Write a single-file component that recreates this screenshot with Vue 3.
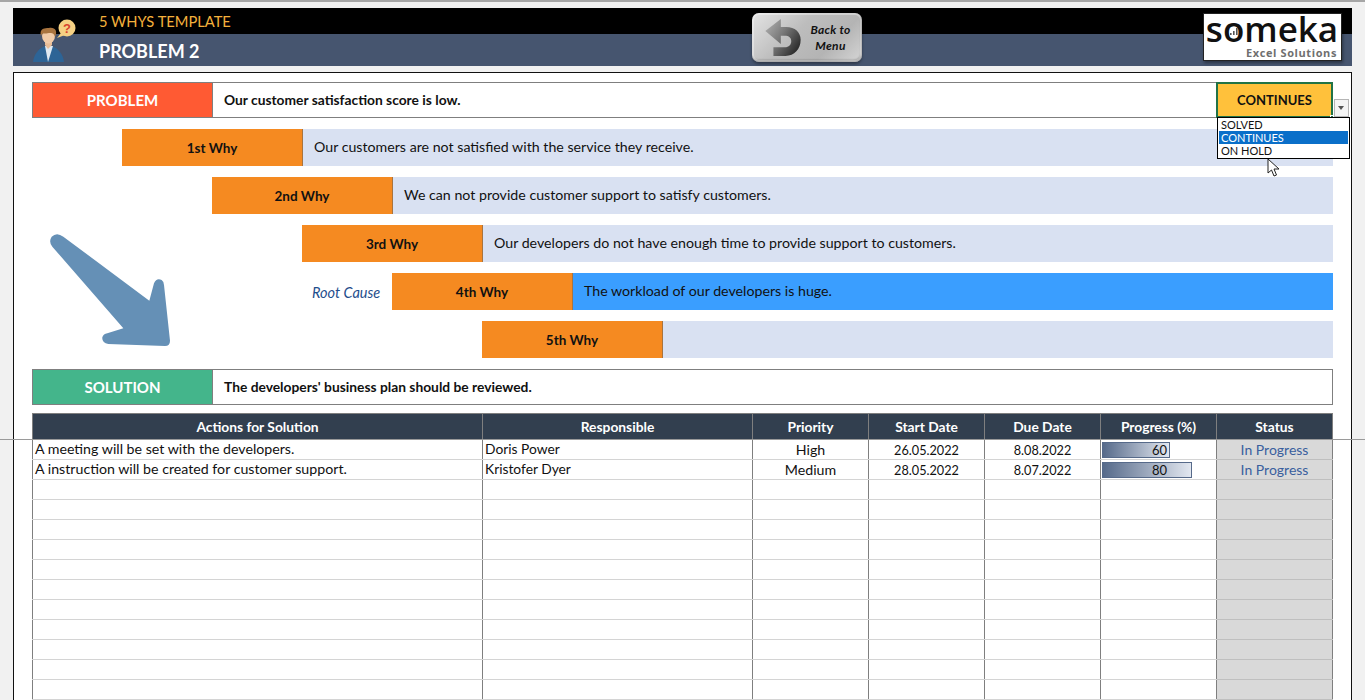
<script setup>
const whys = [
  { label: '1st Why', text: 'Our customers are not satisfied with the service they receive.', offset: 90 },
  { label: '2nd Why', text: 'We can not provide customer support to satisfy customers.', offset: 180 },
  { label: '3rd Why', text: 'Our developers do not have enough time to provide support to customers.', offset: 270 },
  { label: '4th Why', text: 'The workload of our developers is huge.', offset: 270, note: 'Root Cause', root: true },
  { label: '5th Why', text: '', offset: 450 }
];

const actions = [
  { action: 'A meeting will be set with the developers.', owner: 'Doris Power', priority: 'High', start: '26.05.2022', due: '8.08.2022', progress: 60, status: 'In Progress' },
  { action: 'A instruction will be created for customer support.', owner: 'Kristofer Dyer', priority: 'Medium', start: '28.05.2022', due: '8.07.2022', progress: 80, status: 'In Progress' }
];

const rows = [...actions, ...Array.from({ length: 11 }, () => ({}))];
const options = ['SOLVED', 'CONTINUES', 'ON HOLD'];
</script>

<template>
  <div class="page">
    <header class="banner">
      <svg class="avatar" viewBox="0 0 50 50" aria-hidden="true">
        <path d="M5 47 C6 38 12 33 17 31 L24 31 C29 33 35 38 36 47 Z" fill="#2d6496" />
        <path d="M17 31 L20 47 L25 31 Z" fill="#dfe9f2" />
        <path d="M17 30 L17 26 L24 26 L24 30 L20 34 Z" fill="#e9bd97" />
        <ellipse cx="20.5" cy="21" rx="6.5" ry="7.5" fill="#f1cba8" />
        <path d="M13 21 C11 13 17 13 21 13 C27 12 30 16 27 22 C26 18 24 18 21 18 C17 19 15 18 14 19 Z" fill="#a9743f" />
        <path d="M33 18 L29 23 L37 20 Z" fill="#f6d184" />
        <circle cx="39" cy="13" r="8.5" fill="#f6d184" />
        <text x="39" y="18" class="avatar-mark">?</text>
      </svg>
      <div class="titles">
        <span class="template-name">5 WHYS TEMPLATE</span>
        <span class="problem-name">PROBLEM 2</span>
      </div>
      <div class="back-button">
        <svg class="back-icon" viewBox="0 0 105 110" aria-hidden="true">
          <defs>
            <linearGradient id="backFill" x1="0" y1="0" x2="1" y2="0.7">
              <stop offset="0" stop-color="#b5b5b5" />
              <stop offset="0.5" stop-color="#7a7a7a" />
              <stop offset="1" stop-color="#2c2c2c" />
            </linearGradient>
          </defs>
          <path d="M0 36 L46 0 L46 24 L62 24 C88 24 105 40 105 62 C105 90 86 110 60 110 L24 110 L24 84 L58 84 C70 84 77 76 77 66 C77 56 70 50 58 50 L46 50 L46 74 Z" fill="url(#backFill)" />
        </svg>
        <span class="back-label">Back to<br />Menu</span>
      </div>
      <div class="logo">
        <span class="logo-word">s<span class="logo-o">o<svg class="logo-bars" viewBox="0 0 8 8" aria-hidden="true"><path d="M0 8 V6 H1.6 V8 Z M3 8 V4 H4.6 V8 Z M6 8 V1 H7.6 V8 Z" fill="#555" /></svg></span>meka</span>
        <span class="logo-sub">Excel Solutions</span>
      </div>
    </header>

    <main class="sheet">
      <svg class="big-arrow" viewBox="0 0 540 420" aria-hidden="true">
        <path d="M95 50 Q110 35 130 50 L388 242 L402 190 Q410 172 425 180 Q432 185 432 195 L450 362 Q450 378 435 378 L265 372 Q245 368 247 352 Q250 342 262 340 L310 325 L97 80 Q85 65 95 50 Z" fill="#6590b6" />
      </svg>

      <section class="headline">
        <div class="tag tag--problem">PROBLEM</div>
        <div class="headline-text">Our customer satisfaction score is low.</div>
        <div class="status-cell">CONTINUES<i class="fill-handle"></i></div>
      </section>

      <div class="dropdown">
        <div v-for="option in options" :key="option" class="dropdown-item" :class="{ 'dropdown-item--on': option === 'CONTINUES' }">{{ option }}</div>
      </div>
      <div class="dropdown-toggle"><i></i></div>
      <svg class="pointer" viewBox="0 0 14 20" aria-hidden="true">
        <path d="M1 1 L1 15 L4.5 12 L7 18 L9.5 17 L7 11 L12 11 Z" fill="#fff" stroke="#222" stroke-width="1" />
      </svg>

      <section v-for="why in whys" :key="why.label" class="why" :style="{ marginLeft: why.offset + 'px' }">
        <div v-if="why.note" class="why-note">{{ why.note }}</div>
        <div class="why-label">{{ why.label }}</div>
        <div class="why-text" :class="{ 'why-text--root': why.root }">{{ why.text }}</div>
      </section>

      <section class="headline headline--solution">
        <div class="tag tag--solution">SOLUTION</div>
        <div class="headline-text">The developers' business plan should be reviewed.</div>
      </section>

      <table class="actions">
        <colgroup>
          <col class="col-action" />
          <col class="col-owner" />
          <col class="col-small" />
          <col class="col-small" />
          <col class="col-small" />
          <col class="col-small" />
          <col class="col-small" />
        </colgroup>
        <thead>
          <tr>
            <th>Actions for Solution</th>
            <th>Responsible</th>
            <th>Priority</th>
            <th>Start Date</th>
            <th>Due Date</th>
            <th>Progress (%)</th>
            <th>Status</th>
          </tr>
        </thead>
        <tbody>
          <tr v-for="(row, i) in rows" :key="i">
            <td class="lifted">{{ row.action }}</td>
            <td class="lifted owner">{{ row.owner }}</td>
            <td class="center">{{ row.priority }}</td>
            <td class="center date">{{ row.start }}</td>
            <td class="center date">{{ row.due }}</td>
            <td class="progress">
              <template v-if="row.progress">
                <div class="bar" :style="{ width: row.progress * 1.13 + 'px' }"></div>
                <span class="bar-value">{{ row.progress }}</span>
              </template>
            </td>
            <td class="center status">{{ row.status }}</td>
          </tr>
        </tbody>
      </table>
    </main>

    <div class="split-line"></div>
  </div>
</template>

<style>
html,
body {
  margin: 0;
  overflow: hidden;
}
</style>

<style scoped>
.page {
  position: relative;
  box-sizing: border-box;
  width: 1365px;
  height: 700px;
  overflow: hidden;
  padding: 8px 13px 0 13px;
  background: #f1f1f1;
  border-top: 2px solid #a6a6a6;
  font-family: Lato, "Liberation Sans", sans-serif;
  color: #111;
}

.banner {
  display: flex;
  align-items: center;
  box-sizing: border-box;
  height: 58px;
  margin-top: -2px;
  padding: 0 10px 0 15px;
  background: linear-gradient(#000 0 26px, #46556f 26px);
}

.avatar {
  width: 50px;
  height: 50px;
  margin-top: 6px;
  flex: none;
}

.avatar-mark {
  font: 700 13px "Liberation Sans", sans-serif;
  fill: #d8442e;
  text-anchor: middle;
}

.titles {
  display: flex;
  flex-direction: column;
  width: 653px;
  margin-left: 21px;
  flex: none;
}

.template-name {
  height: 26px;
  line-height: 26px;
  color: #f4b13c;
  font-size: 14.7px;
}

.problem-name {
  height: 32px;
  line-height: 35px;
  color: #fff;
  font-size: 18px;
  font-weight: 700;
}

.back-button {
  display: flex;
  align-items: center;
  box-sizing: border-box;
  width: 110px;
  height: 49px;
  margin-top: 1px;
  padding-left: 13px;
  border-radius: 7px;
  background: linear-gradient(135deg, #e4e4e4 0%, #bdbdbd 40%, #b4b4b4 70%, #d6d6d6 100%);
  box-shadow: inset 0 0 0 2px rgba(255, 255, 255, 0.35), inset -1px -2px 2px rgba(0, 0, 0, 0.35), 0 2px 3px rgba(0, 0, 0, 0.35);
  flex: none;
}

.back-icon {
  width: 36px;
  height: 37px;
  flex: none;
}

.back-label {
  flex: 1;
  padding-right: 2px;
  text-align: center;
  color: #111;
  font-size: 12px;
  font-style: italic;
  font-weight: 700;
  line-height: 16px;
  letter-spacing: 0.3px;
}

.logo {
  display: flex;
  flex-direction: column;
  align-items: center;
  box-sizing: border-box;
  width: 139px;
  height: 48px;
  margin-left: auto;
  padding: 0 4px 0 3px;
  background: #fff;
  border: 1px solid #222;
  box-shadow: 1px 2px 3px rgba(0, 0, 0, 0.4);
  flex: none;
}

.logo-word {
  height: 31px;
  line-height: 29px;
  color: #111;
  font-family: "Open Sans", sans-serif;
  font-size: 35px;
  font-weight: 600;
  white-space: nowrap;
}

.logo-o {
  position: relative;
  display: inline-block;
}

.logo-bars {
  position: absolute;
  left: 7px;
  top: 13px;
  width: 8px;
  height: 8px;
}

.logo-sub {
  align-self: flex-end;
  color: #6f6f6f;
  font-family: "Open Sans", sans-serif;
  font-size: 11px;
  font-weight: 700;
  line-height: 15px;
  letter-spacing: 0.6px;
}

.sheet {
  position: relative;
  box-sizing: border-box;
  height: 640px;
  margin-top: 6px;
  padding: 9px 18px 0;
  background: #fff;
  border: 1px solid #111;
  border-bottom: 0;
}

.big-arrow {
  position: absolute;
  left: 6px;
  top: 147px;
  width: 180px;
  height: 140px;
}

.headline {
  display: flex;
  align-items: center;
  height: 36px;
  margin-bottom: 11px;
  border: 1px solid #7f7f7f;
  border-left: 0;
  box-sizing: border-box;
}

.headline--solution {
  margin-bottom: 8px;
}

.tag {
  display: flex;
  align-items: center;
  justify-content: center;
  box-sizing: border-box;
  width: 181px;
  height: 36px;
  margin-top: -1px;
  margin-bottom: -1px;
  border: 1px solid #7f7f7f;
  color: #fff;
  font-size: 15px;
  font-weight: 700;
  flex: none;
}

.tag--problem {
  background: #ff5a33;
}

.tag--solution {
  background: #44b58b;
}

.headline-text {
  flex: 1;
  padding: 0 0 2px 11px;
  font-size: 13.8px;
  font-weight: 700;
}

.status-cell {
  position: relative;
  z-index: 2;
  display: flex;
  align-items: center;
  justify-content: center;
  box-sizing: border-box;
  width: 117px;
  height: 36px;
  margin: -1px -1px -1px 0;
  background: #ffc13b;
  border: 2px solid #217346;
  font-size: 13px;
  font-weight: 700;
}

.fill-handle {
  position: absolute;
  right: -3px;
  bottom: -3px;
  width: 4px;
  height: 4px;
  background: #217346;
  border: 1px solid #fff;
  box-sizing: border-box;
}

.dropdown {
  position: absolute;
  z-index: 3;
  top: 44px;
  left: 1203px;
  box-sizing: border-box;
  width: 133px;
  height: 42px;
  padding: 0 1px;
  background: #fff;
  border: 1px solid #000;
}

.dropdown-item {
  height: 13px;
  padding-left: 2px;
  font-size: 11px;
  line-height: 13px;
}

.dropdown-item--on {
  background: #0a6fc9;
  color: #fff;
}

.dropdown-toggle {
  position: absolute;
  z-index: 3;
  top: 26px;
  left: 1320px;
  box-sizing: border-box;
  width: 15px;
  height: 18px;
  background: #f4f4f4;
  border: 1px solid #b5b5b5;
}

.dropdown-toggle i {
  position: absolute;
  left: 3px;
  top: 6px;
  border-style: solid;
  border-width: 4px 3.5px 0;
  border-color: #555 transparent transparent;
}

.pointer {
  position: absolute;
  z-index: 4;
  top: 85px;
  left: 1253px;
  width: 14px;
  height: 20px;
}

.why {
  display: flex;
  height: 37px;
  margin-bottom: 11px;
}

.why-note {
  width: 80px;
  padding-left: 10px;
  color: #1f4e8c;
  font-size: 14.5px;
  font-style: italic;
  line-height: 39px;
  flex: none;
}

.why-label {
  width: 181px;
  background: #f58a21;
  border-right: 1px solid #a9743f;
  box-sizing: border-box;
  text-align: center;
  font-size: 13.5px;
  font-weight: 700;
  line-height: 39px;
  flex: none;
}

.why-text {
  flex: 1;
  padding-left: 11px;
  background: #d9e1f2;
  font-size: 14.2px;
  line-height: 36px;
}

.why-text--root {
  background: #3a9eff;
}

.actions {
  width: 1301px;
  border-collapse: collapse;
  table-layout: fixed;
  font-size: 14.2px;
}

.col-action {
  width: 450px;
}

.col-owner {
  width: 270px;
}

.col-small {
  width: 116px;
}

.actions th {
  height: 25px;
  padding: 0;
  background: #323f4f;
  border: 1px solid #7f7f7f;
  color: #fff;
  font-size: 13.8px;
  font-weight: 700;
}

.actions td {
  box-sizing: border-box;
  height: 20px;
  padding: 0 2px;
  border-bottom: 1px solid #d4d4d4;
  border-left: 1px solid #7f7f7f;
  border-right: 1px solid #7f7f7f;
  white-space: nowrap;
  line-height: 18px;
}

.actions .lifted {
  padding-bottom: 2px;
  line-height: 16px;
}

.actions .owner {
  font-size: 13.8px;
}

.actions .center {
  text-align: center;
}

.actions .date {
  font-size: 12.7px;
}

.actions .progress {
  position: relative;
  padding: 0;
}

.bar {
  box-sizing: border-box;
  height: 16px;
  margin-left: 1px;
  background: linear-gradient(90deg, #566a8a, #e2e7f0);
  border: 1px solid #566a8a;
}

.bar-value {
  position: absolute;
  right: 49px;
  top: 1px;
  font-size: 13px;
}

.actions .status {
  background: #d9d9d9;
  border-bottom-color: #bfbfbf;
  color: #3a5f9e;
  font-size: 14px;
}

.split-line {
  position: absolute;
  z-index: 5;
  left: 0;
  right: 0;
  top: 437px;
  height: 1px;
  background: #9a9a9a;
}
</style>
